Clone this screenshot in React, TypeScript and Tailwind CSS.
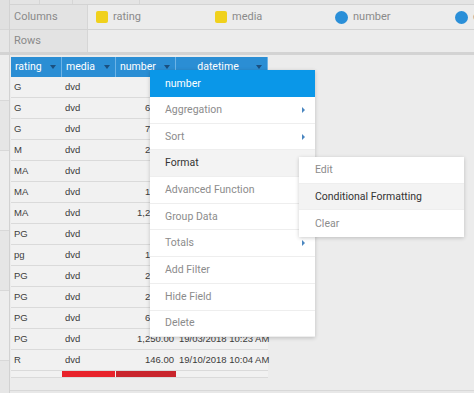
import React from 'react';

const ROWS: { rating: string; num: string; date: string }[] = [
  { rating: 'G', num: '', date: '' },
  { rating: 'G', num: '650.00', date: '19/10/2018 10:04 AM' },
  { rating: 'G', num: '750.00', date: '19/10/2018 10:04 AM' },
  { rating: 'M', num: '250.00', date: '19/10/2018 10:04 AM' },
  { rating: 'MA', num: '', date: '' },
  { rating: 'MA', num: '146.00', date: '19/10/2018 10:04 AM' },
  { rating: 'MA', num: '1,250.00', date: '19/03/2018 10:23 AM' },
  { rating: 'PG', num: '', date: '' },
  { rating: 'pg', num: '146.00', date: '19/10/2018 10:04 AM' },
  { rating: 'PG', num: '250.00', date: '19/10/2018 10:04 AM' },
  { rating: 'PG', num: '250.00', date: '19/10/2018 10:04 AM' },
  { rating: 'PG', num: '650.00', date: '19/10/2018 10:04 AM' },
  { rating: 'PG', num: '1,250.00', date: '19/03/2018 10:23 AM' },
  { rating: 'R', num: '146.00', date: '19/10/2018 10:04 AM' },
];

const MENU = [
  { label: 'Aggregation', sub: true },
  { label: 'Sort', sub: true },
  { label: 'Format', sub: false, active: true },
  { label: 'Advanced Function', sub: false },
  { label: 'Group Data', sub: false },
  { label: 'Totals', sub: true },
  { label: 'Add Filter', sub: false },
  { label: 'Hide Field', sub: false },
  { label: 'Delete', sub: false },
];

function Caret() {
  return (
    <svg width="6" height="4" viewBox="0 0 6 4" className="shrink-0">
      <path d="M0 0h6L3 4z" fill="#1b4f7e" />
    </svg>
  );
}

function RightCaret() {
  return (
    <svg width="3" height="6" viewBox="0 0 3 6" className="shrink-0">
      <path d="M0 0l3 3-3 3z" fill="#4a86c0" />
    </svg>
  );
}

function HeaderCell({ label, w, center }: { label: string; w: string; center?: boolean }) {
  return (
    <div className={`${w} flex items-center border-r border-[#6cb3e6] pl-[4px] pr-[5px] h-full`}>
      <span className={center ? 'flex-1 text-center' : 'flex-1'}>{label}</span>
      <Caret />
    </div>
  );
}

export default function App() {
  return (
    <div
      className="relative flex h-[393px] w-[474px] overflow-hidden bg-[#ececec]"
      style={{ fontFamily: 'Roboto, "Liberation Sans", sans-serif' }}
    >
      {/* left panel behind */}
      <div className="flex w-[10px] shrink-0 flex-col border-r border-[#d2d2d2] bg-[#e6e6e6]">
        <div className="h-[30px] border-b border-[#d6d6d6] bg-[#e0e0e0]" />
        <div className="h-[25px] border-b-[3px] border-[#d3d3d3]" />
        <div className="h-[46px] border-b border-[#d8d8d8] bg-[#ededed]" />
        <div className="h-[50px] border-b border-[#d8d8d8]" />
        <div className="h-[80px] border-b border-[#d8d8d8] bg-[#ededed]" />
        <div className="h-[60px] border-b border-[#d8d8d8]" />
        <div className="h-[70px] border-b border-[#d8d8d8] bg-[#ededed]" />
        <div className="flex-1" />
      </div>

      <div className="flex min-w-0 flex-1 flex-col">
        <div className="flex h-[5px] border-b border-[#d3d3d3] bg-[#e4e4e4]">
          <div className="w-[30px] border-r border-[#d6d6d6]" />
          <div className="w-[33px] border-r border-[#d6d6d6]" />
          <div className="w-[67px] border-r border-[#d6d6d6]" />
        </div>

        {/* Columns */}
        <div className="flex h-[25px] border-b border-[#d3d3d3]">
          <div className="flex w-[78px] shrink-0 items-center border-r border-[#d6d6d6] bg-[#e3e3e3] pl-[4px] text-[11px] text-[#8a8a8a]">
            Columns
          </div>
          <div className="flex items-center pl-[8px] text-[11px] text-[#8a8a8a]">
            <div className="flex w-[119px] shrink-0 items-center gap-[5px]">
              <span className="h-[12px] w-[12px] rounded-[2px] bg-[#f0d11c]" />
              rating
            </div>
            <div className="flex w-[120px] shrink-0 items-center gap-[5px]">
              <span className="h-[12px] w-[12px] rounded-[2px] bg-[#f0d11c]" />
              media
            </div>
            <div className="flex w-[120px] shrink-0 items-center gap-[5px]">
              <span className="h-[13px] w-[13px] rounded-full bg-[#2a8fd8]" />
              number
            </div>
            <div className="flex w-[120px] shrink-0 items-center gap-[5px]">
              <span className="h-[13px] w-[13px] rounded-full bg-[#2a8fd8]" />
              datetime
            </div>
          </div>
        </div>

        {/* Rows */}
        <div className="flex h-[25px] border-b-[3px] border-[#d3d3d3]">
          <div className="flex w-[78px] shrink-0 items-center border-r border-[#d6d6d6] bg-[#e3e3e3] pl-[4px] text-[11px] text-[#8a8a8a]">
            Rows
          </div>
          <div className="flex-1" />
        </div>

        {/* table */}
        <div className="pl-[1px] pt-[2px]">
          <div className="w-[257px]">
            <div className="flex h-[20px] bg-[#2b8ed4] text-[10.5px] text-white">
              <HeaderCell label="rating" w="w-[51px]" />
              <HeaderCell label="media" w="w-[54px]" />
              <HeaderCell label="number" w="w-[60px]" />
              <HeaderCell label="datetime" w="w-[92px]" center />
            </div>
            <div className="text-[9.5px] text-[#3c3c3c]" style={{ fontFamily: '"Liberation Sans", Arial, sans-serif' }}>
              {ROWS.map((r, i) => (
                <div key={i} className="flex h-[21px] items-center border-b border-[#dadada] bg-[#f1f1f1]">
                  <div className="w-[51px] pl-[3px]">{r.rating}</div>
                  <div className="w-[54px] pl-[3px]">dvd</div>
                  <div className="w-[60px] pr-[2px] text-right">{r.num}</div>
                  <div className="w-[92px] whitespace-nowrap pl-[3px]">{r.date}</div>
                </div>
              ))}
              <div className="flex h-[7px] border-b border-[#dadada] bg-[#f1f1f1]">
                <div className="w-[51px]" />
                <div className="h-[6px] w-[53px] bg-[#e8222a]" />
                <div className="w-[1px]" />
                <div className="h-[6px] w-[60px] bg-[#c9252c]" />
              </div>
            </div>
          </div>
        </div>
        <div className="flex-1" />
        <div className="h-[3px] border-t border-[#d8d8d8] bg-[#e8e8e8]" />
      </div>

      {/* context menu */}
      <div className="absolute left-[150px] top-[70px] w-[165px] bg-white text-[10.5px] shadow-[0_1px_4px_rgba(0,0,0,0.2)]">
        <div className="flex h-[27px] items-center bg-[#0a97e8] pl-[15px] text-white">number</div>
        {MENU.map((m) => (
          <div
            key={m.label}
            className={`flex h-[26.7px] items-center border-b border-[#eeeeee] pl-[15px] pr-[10px] ${
              m.active ? 'bg-[#f3f3f3] text-[#333]' : 'text-[#8c8c8c]'
            }`}
          >
            <span className="flex-1">{m.label}</span>
            {m.sub && <RightCaret />}
          </div>
        ))}
      </div>

      {/* submenu */}
      <div className="absolute left-[299px] top-[157px] w-[165px] bg-white text-[10.5px] shadow-[0_1px_4px_rgba(0,0,0,0.2)]">
        <div className="flex h-[26.7px] items-center border-b border-[#eeeeee] pl-[16px] text-[#8c8c8c]">Edit</div>
        <div className="flex h-[26.7px] items-center border-b border-[#eeeeee] bg-[#f3f3f3] pl-[16px] text-[#333]">
          Conditional Formatting
        </div>
        <div className="flex h-[26.7px] items-center pl-[16px] text-[#8c8c8c]">Clear</div>
      </div>
    </div>
  );
}
